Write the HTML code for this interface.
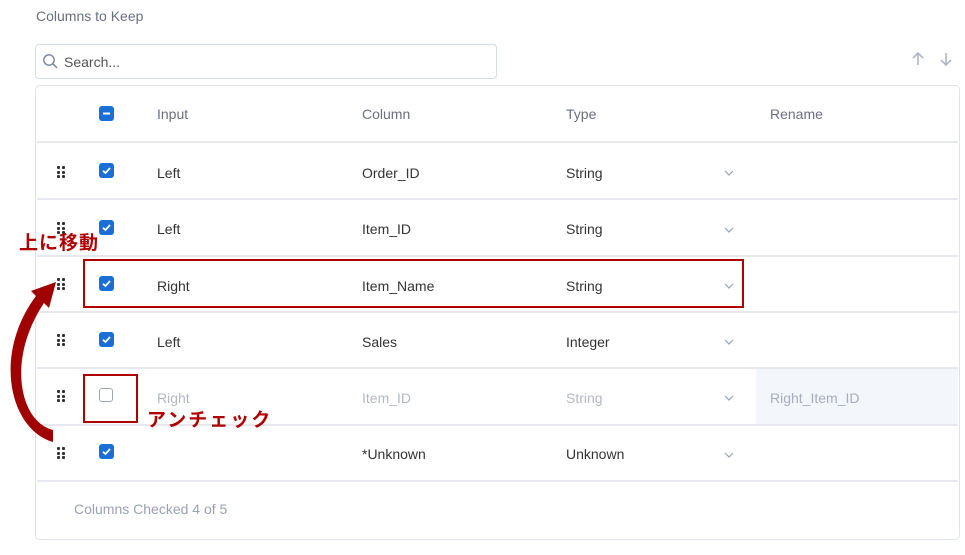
<!DOCTYPE html>
<html><head><meta charset="utf-8"><style>
body{margin:0;width:965px;height:555px;background:#fff;position:relative;overflow:hidden;font-family:"Liberation Sans","Noto Sans CJK JP",sans-serif;}
.a{position:absolute;}
.t{position:absolute;font-size:14px;color:#333;line-height:16px;}
.h{color:#6b6f80;}
.g{color:#b4b8c4;}
.sep{position:absolute;left:37px;width:921px;height:2px;background:#e6e8ee;}
.cb{position:absolute;left:99px;width:15px;height:15px;border-radius:3px;background:#1a6fd6;}
.cb svg{position:absolute;left:0;top:0}
.dr{position:absolute;left:57px;width:8px;height:12px;}
.dr i{position:absolute;width:3px;height:3px;background:#333;border-radius:1px}
.ch{position:absolute;left:724px;}
.red{position:absolute;border:2px solid #b00000;}
.jp{position:absolute;color:#b00000;font-weight:bold;font-size:19px;font-family:"Noto Sans CJK JP",sans-serif;line-height:20px;}
</style></head><body>
<div class="t h" style="left:36px;top:8px;font-size:14px">Columns to Keep</div>
<div class="a" style="left:35px;top:44px;width:460px;height:33px;border:1px solid #d5dbe8;border-radius:4px"></div>
<svg class="a" style="left:42px;top:53px" width="16" height="16"><circle cx="7" cy="7" r="5.2" fill="none" stroke="#7a8599" stroke-width="1.4"/><line x1="11" y1="11" x2="15" y2="15" stroke="#7a8599" stroke-width="1.5"/></svg>
<div class="t" style="left:64px;top:54px;color:#555">Search...</div>
<svg class="a" style="left:910px;top:51px" width="44" height="16"><path d="M8 2V14M3 7L8 2L13 7" fill="none" stroke="#b0b6c4" stroke-width="1.6"/><path d="M36 2V14M31 9L36 14L41 9" fill="none" stroke="#b0b6c4" stroke-width="1.6"/></svg>
<div class="a" style="left:35px;top:85px;width:923px;height:453px;border:1px solid #dde2ec;border-radius:5px"></div>
<div class="cb" style="top:106px"><svg width="15" height="15"><line x1="4" y1="7.5" x2="11" y2="7.5" stroke="#fff" stroke-width="2"/></svg></div>
<div class="t h" style="left:157px;top:106px">Input</div>
<div class="t h" style="left:362px;top:106px">Column</div>
<div class="t h" style="left:566px;top:106px">Type</div>
<div class="t h" style="left:770px;top:106px">Rename</div>
<div class="sep" style="top:141px"></div>
<div class="sep" style="top:198px"></div>
<div class="sep" style="top:255px"></div>
<div class="sep" style="top:311px"></div>
<div class="sep" style="top:367px"></div>
<div class="sep" style="top:424px"></div>
<div class="sep" style="top:480px"></div>
<div class="a" style="left:756px;top:369px;width:202px;height:55px;background:#f3f6fb"></div>

<div class="dr" style="top:166px"><i style="left:0;top:0"></i><i style="left:5px;top:0"></i><i style="left:0;top:4.5px"></i><i style="left:5px;top:4.5px"></i><i style="left:0;top:9px"></i><i style="left:5px;top:9px"></i></div>
<div class="cb" style="top:163px"><svg width="15" height="15"><path d="M4 7.8L6.5 10L11 5" fill="none" stroke="#fff" stroke-width="1.8"/></svg></div>
<div class="t" style="left:157px;top:165px">Left</div><div class="t" style="left:362px;top:165px">Order_ID</div><div class="t" style="left:566px;top:165px">String</div>
<svg class="ch" style="top:169px" width="10" height="8"><path d="M1 2L5 6L9 2" fill="none" stroke="#9aa3b5" stroke-width="1.2"/></svg>

<div class="dr" style="top:222px"><i style="left:0;top:0"></i><i style="left:5px;top:0"></i><i style="left:0;top:4.5px"></i><i style="left:5px;top:4.5px"></i><i style="left:0;top:9px"></i><i style="left:5px;top:9px"></i></div>
<div class="cb" style="top:220px"><svg width="15" height="15"><path d="M4 7.8L6.5 10L11 5" fill="none" stroke="#fff" stroke-width="1.8"/></svg></div>
<div class="t" style="left:157px;top:221px">Left</div><div class="t" style="left:362px;top:221px">Item_ID</div><div class="t" style="left:566px;top:221px">String</div>
<svg class="ch" style="top:226px" width="10" height="8"><path d="M1 2L5 6L9 2" fill="none" stroke="#9aa3b5" stroke-width="1.2"/></svg>

<div class="dr" style="top:278px"><i style="left:0;top:0"></i><i style="left:5px;top:0"></i><i style="left:0;top:4.5px"></i><i style="left:5px;top:4.5px"></i><i style="left:0;top:9px"></i><i style="left:5px;top:9px"></i></div>
<div class="cb" style="top:276px"><svg width="15" height="15"><path d="M4 7.8L6.5 10L11 5" fill="none" stroke="#fff" stroke-width="1.8"/></svg></div>
<div class="t" style="left:157px;top:278px">Right</div><div class="t" style="left:362px;top:278px">Item_Name</div><div class="t" style="left:566px;top:278px">String</div>
<svg class="ch" style="top:282px" width="10" height="8"><path d="M1 2L5 6L9 2" fill="none" stroke="#9aa3b5" stroke-width="1.2"/></svg>

<div class="dr" style="top:334px"><i style="left:0;top:0"></i><i style="left:5px;top:0"></i><i style="left:0;top:4.5px"></i><i style="left:5px;top:4.5px"></i><i style="left:0;top:9px"></i><i style="left:5px;top:9px"></i></div>
<div class="cb" style="top:332px"><svg width="15" height="15"><path d="M4 7.8L6.5 10L11 5" fill="none" stroke="#fff" stroke-width="1.8"/></svg></div>
<div class="t" style="left:157px;top:334px">Left</div><div class="t" style="left:362px;top:334px">Sales</div><div class="t" style="left:566px;top:334px">Integer</div>
<svg class="ch" style="top:338px" width="10" height="8"><path d="M1 2L5 6L9 2" fill="none" stroke="#9aa3b5" stroke-width="1.2"/></svg>

<div class="dr" style="top:390px"><i style="left:0;top:0"></i><i style="left:5px;top:0"></i><i style="left:0;top:4.5px"></i><i style="left:5px;top:4.5px"></i><i style="left:0;top:9px"></i><i style="left:5px;top:9px"></i></div>
<div class="a" style="left:99px;top:388px;width:12px;height:12px;border:1.5px solid #9ea6b8;border-radius:3px"></div>
<div class="t g" style="left:157px;top:390px">Right</div><div class="t g" style="left:362px;top:390px">Item_ID</div><div class="t g" style="left:566px;top:390px">String</div>
<svg class="ch" style="top:394px" width="10" height="8"><path d="M1 2L5 6L9 2" fill="none" stroke="#9aa3b5" stroke-width="1.2"/></svg>
<div class="t g" style="left:770px;top:390px;color:#a8adb9">Right_Item_ID</div>

<div class="dr" style="top:447px"><i style="left:0;top:0"></i><i style="left:5px;top:0"></i><i style="left:0;top:4.5px"></i><i style="left:5px;top:4.5px"></i><i style="left:0;top:9px"></i><i style="left:5px;top:9px"></i></div>
<div class="cb" style="top:444px"><svg width="15" height="15"><path d="M4 7.8L6.5 10L11 5" fill="none" stroke="#fff" stroke-width="1.8"/></svg></div>
<div class="t" style="left:362px;top:446px">*Unknown</div><div class="t" style="left:566px;top:446px">Unknown</div>
<svg class="ch" style="top:451px" width="10" height="8"><path d="M1 2L5 6L9 2" fill="none" stroke="#9aa3b5" stroke-width="1.2"/></svg>
<div class="t" style="left:74px;top:501px;color:#9ba1b0">Columns Checked 4 of 5</div>

<div class="red" style="left:83px;top:259px;width:657px;height:45px"></div>
<div class="red" style="left:83px;top:374px;width:51px;height:45px"></div>
<div class="jp" style="left:19px;top:232px;letter-spacing:1px">上に移動</div>
<div class="jp" style="left:147px;top:409px;letter-spacing:2px">アンチェック</div>
<svg class="a" style="left:0;top:270px" width="70" height="180">
<path d="M53 172C10 160 -8 85 36 26L31 21L56 12L49 38L44 33C6 90 20 152 53 160Z" fill="#a00000"/>
</svg>
</body></html>
